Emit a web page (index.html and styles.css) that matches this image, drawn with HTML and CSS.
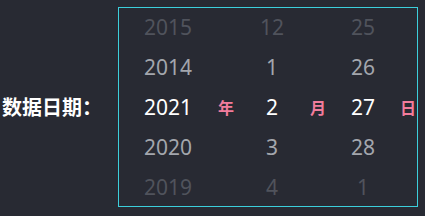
FILE: index.html
```html
<!DOCTYPE html>
<html lang="zh">
<head>
<meta charset="utf-8">
<link rel="stylesheet" href="styles.css">
</head>
<body>
<div class="field">
  <div class="label">数据日期：</div>
  <div class="picker">
    <div class="col col-year">
      <div class="wheel">
        <div class="item far">2015</div>
        <div class="item near">2014</div>
        <div class="item cur">2021</div>
        <div class="item near">2020</div>
        <div class="item far">2019</div>
      </div>
      <div class="unit">年</div>
    </div>
    <div class="col col-month">
      <div class="wheel">
        <div class="item far">12</div>
        <div class="item near">1</div>
        <div class="item cur">2</div>
        <div class="item near">3</div>
        <div class="item far">4</div>
      </div>
      <div class="unit">月</div>
    </div>
    <div class="col col-day">
      <div class="wheel">
        <div class="item far">25</div>
        <div class="item near">26</div>
        <div class="item cur">27</div>
        <div class="item near">28</div>
        <div class="item far">1</div>
      </div>
      <div class="unit">日</div>
    </div>
  </div>
</div>
</body>
</html>
```
FILE: styles.css
```css
html, body {
  margin: 0;
  padding: 0;
  background: #282a33;
  width: 425px;
  height: 216px;
  overflow: hidden;
}
.field {
  display: flex;
  align-items: center;
  padding: 7px 0 0 2px;
}
.label {
  width: 116px;
  color: #ffffff;
  font-family: "Noto Sans CJK SC", sans-serif;
  font-weight: 700;
  font-size: 20px;
  line-height: 22px;
  white-space: nowrap;
}
.picker {
  display: flex;
  width: 300px;
  height: 200px;
  box-shadow: inset 0 0 0 1px #3ccfdc;
  font-family: "Noto Sans", "Noto Sans CJK SC", sans-serif;
}
.col {
  display: flex;
  align-items: center;
}
.wheel {
  display: flex;
  flex-direction: column;
}
.col-year .wheel { width: 100px; }
.col-month .wheel { width: 76px; }
.col-day .wheel { width: 74px; }
.item {
  height: 40px;
  line-height: 40px;
  text-align: center;
  font-size: 21px;
}
.far { color: #50535c; }
.near { color: #a3a6ad; }
.cur { color: #ffffff; }
.unit {
  width: 16px;
  text-align: center;
  color: #f27c9c;
  font-family: "Noto Sans CJK SC", sans-serif;
  font-weight: 700;
  font-size: 16px;
}
.col-day .unit { width: 14px; }
```
